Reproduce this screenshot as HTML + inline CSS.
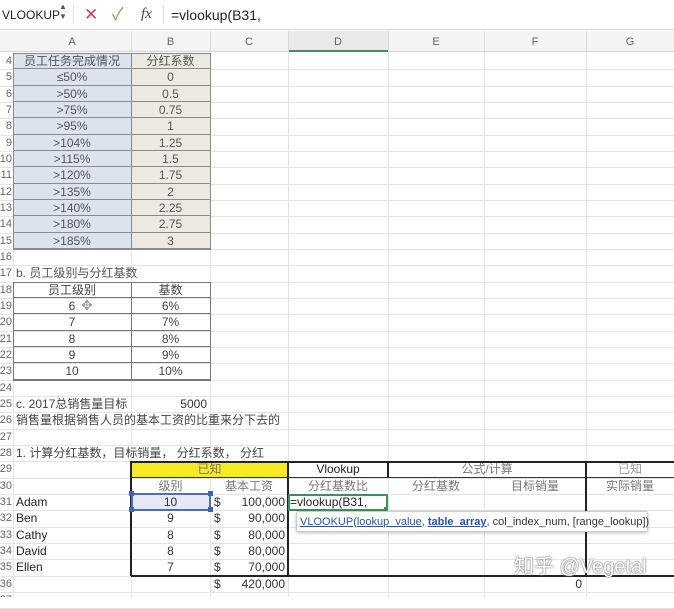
<!DOCTYPE html>
<html><head><meta charset="utf-8">
<style>
*{margin:0;padding:0;box-sizing:border-box}
body{width:674px;height:597px;overflow:hidden;background:#fff;position:relative;font-family:"Liberation Sans","Noto Sans CJK SC",sans-serif;font-size:12px;color:#222}
.a{position:absolute;white-space:nowrap;overflow:hidden}
.c{position:absolute;white-space:nowrap;line-height:16px}
</style></head><body>
<div class="a" style="left:0;top:0;width:674px;height:30px;background:#fff;border-bottom:1px solid #d6d6d6"></div>
<div class="c" style="left:2px;top:7px;font-size:12px;color:#222">VLOOKUP</div>
<div class="c" style="left:59px;top:2px;font-size:8px;line-height:10px;color:#555">▲<br>▼</div>
<div class="a" style="left:73px;top:6px;width:1px;height:18px;background:#ddd"></div>
<div class="c" style="left:84px;top:5px;font-size:17px;line-height:20px;color:#c9454f">✕</div>
<div class="c" style="left:112px;top:5px;font-size:17px;line-height:20px;color:#6aaa4e">✓</div>
<div class="c" style="left:141px;top:6px;font-size:15px;font-style:italic;font-family:'Liberation Serif',serif;color:#444">fx</div>
<div class="a" style="left:163px;top:6px;width:1px;height:18px;background:#ddd"></div>
<div class="c" style="left:171px;top:6px;font-size:14px;line-height:18px;color:#222">=vlookup(B31,</div>
<div class="a" style="left:0;top:31px;width:674px;height:21px;background:#f4f4f4;border-bottom:1px solid #d4d4d4"></div>
<div class="a" style="left:288px;top:31px;width:100px;height:21px;background:#e9e9e9;border-bottom:2px solid #3f8f5a"></div>
<div id="g"></div>
<div class="a" id="rn" style="left:0;top:52px;width:13px;height:545px"></div>
<script>
const g=document.getElementById('g'),rn=document.getElementById('rn');
const X=[0,13,131,210,288,388,484,586,674];
const T=r=>53+(r-4)*16.33;
function add(h){g.insertAdjacentHTML('beforeend',h)}
function box(l,t,w,h,s){add(`<div class="a" style="left:${l}px;top:${t}px;width:${w}px;height:${h}px;${s}"></div>`)}
function txt(l,t,w,s,st,al){add(`<div class="c" style="left:${l}px;top:${t}px;width:${w}px;text-align:${al||'center'};${st||''}">${s}</div>`)}
"ABCDEFG".split('').forEach((c,i)=>{txt(X[i+1],34,X[i+2]-X[i+1],c,'color:#666;font-size:11px');box(X[i+2],31,1,21,'background:#d8d8d8')});
for(let r=4;r<=37;r++){box(0,T(r+1),674,1,'background:#e4e4e4');rn.insertAdjacentHTML('beforeend',`<div class="c" style="left:-10px;top:${T(r)-52}px;width:22px;text-align:right;color:#666;font-size:11px">${r}</div>`)}
for(let i=1;i<8;i++)box(X[i],52,1,545,'background:#e4e4e4');
const t1=[["员工任务完成情况","分红系数"],["≤50%","0"],[">50%","0.5"],[">75%","0.75"],[">95%","1"],[">104%","1.25"],[">115%","1.5"],[">120%","1.75"],[">135%","2"],[">140%","2.25"],[">180%","2.75"],[">185%","3"]];
t1.forEach((p,k)=>{const r=4+k,t=T(r);box(13,t,118,16.33,'background:#dbe3ef;border-bottom:1px solid #8a8a8a');box(131,t,79,16.33,'background:#ebe9e0;border-bottom:1px solid #8a8a8a;border-left:1px solid #8a8a8a');
txt(13,t,118,p[0],'color:#555');txt(131,t,79,p[1],'color:#555')});
box(13,T(4),198,T(16)-T(4)+1,'border:1px solid #8a8a8a');
txt(16,T(17),200,'b. 员工级别与分红基数','color:#555','left');
const t2=[["员工级别","基数"],["6","6%"],["7","7%"],["8","8%"],["9","9%"],["10","10%"]];
t2.forEach((p,k)=>{const t=T(18+k);box(13,t,198,16.33,'border-bottom:1px solid #777');txt(13,t,118,p[0],'color:#444');txt(131,t,79,p[1],'color:#444')});
box(13,T(18),198,T(24)-T(18)+1,'border:1px solid #777');box(131,T(18),1,T(24)-T(18),'background:#777');
txt(81,T(19)-1,20,'✥','color:#999;font-size:14px','left');
txt(16,T(25),200,'c. 2017总销售量目标','color:#444','left');txt(131,T(25),76,'5000','color:#333','right');
txt(16,T(26),300,'销售量根据销售人员的基本工资的比重来分下去的','color:#444','left');
txt(16,T(28),300,'1. 计算分红基数，目标销量， 分红系数， 分红','color:#444','left');
box(132,T(29),156,16.33,'background:#f7ea22');
txt(131,T(29),157,'已知','color:#777');txt(288,T(29),100,'Vlookup','color:#222');txt(388,T(29),198,'公式/计算','color:#777');txt(586,T(29),88,'已知','color:#999');
["级别","基本工资","分红基数比","分红基数","目标销量","实际销量"].forEach((s,i)=>txt(X[i+2],T(30),X[i+3]-X[i+2],s,'color:#777'));
box(131,T(29),550,2,'background:#222');box(131,T(30)-1,543,1,'background:#333');box(131,T(36)-1,550,2,'background:#222');
[131,288,586].forEach(x=>box(x-1,T(29),2,T(36)-T(29),'background:#222'));box(387,T(29),2,16.33,'background:#222');
const names=["Adam","Ben","Cathy","David","Ellen"],lv=["10","9","8","8","7"],sal=["100,000","90,000","80,000","80,000","70,000"];
names.forEach((n,k)=>{const t=T(31+k);txt(16,t,110,n,'color:#222','left');if(k==0)box(132,t,78,16.33,'background:#e6e9f6');txt(131,t,79,lv[k],'color:#333');txt(214,t,20,'$','color:#333','left');txt(210,t,75,sal[k],'color:#333','right')});
txt(214,T(36),20,'$','color:#333','left');txt(210,T(36),75,'420,000','color:#333','right');txt(484,T(36),98,'0','color:#333','right');
box(131,T(31)-1,80,18,'border:2px solid #4a6fb8');
[[129,T(31)-3],[208,T(31)-3],[129,T(32)-3],[208,T(32)-3]].forEach(p=>box(p[0],p[1],5,5,'background:#3f63b5'));
box(288,T(31),100,17,'border:2px solid #3f8f5a;background:#fff');
txt(290,T(31),96,'=vlookup(B31,','color:#222','left');box(384,T(32)-3,4,4,'background:#3f8f5a');
box(296,511,352,21,'background:#fff;border:1px solid #ccc;box-shadow:0 1px 3px rgba(0,0,0,.25);border-radius:2px');
add(`<div class="c" style="left:300px;top:514px;font-size:11px;color:#333"><u style="color:#2456a8">VLOOKUP</u><span style="color:#2456a8">(<u>lookup_value</u>, <b><u>table_array</u></b></span>, col_index_num, [range_lookup])</div>`);
add(`<div class="c" style="left:514px;top:555px;font-size:20px;line-height:24px;color:#fff;text-shadow:0 0 2px #777,0 0 1px #555">知乎 @Vegetal</div>`);
</script>
</body></html>
